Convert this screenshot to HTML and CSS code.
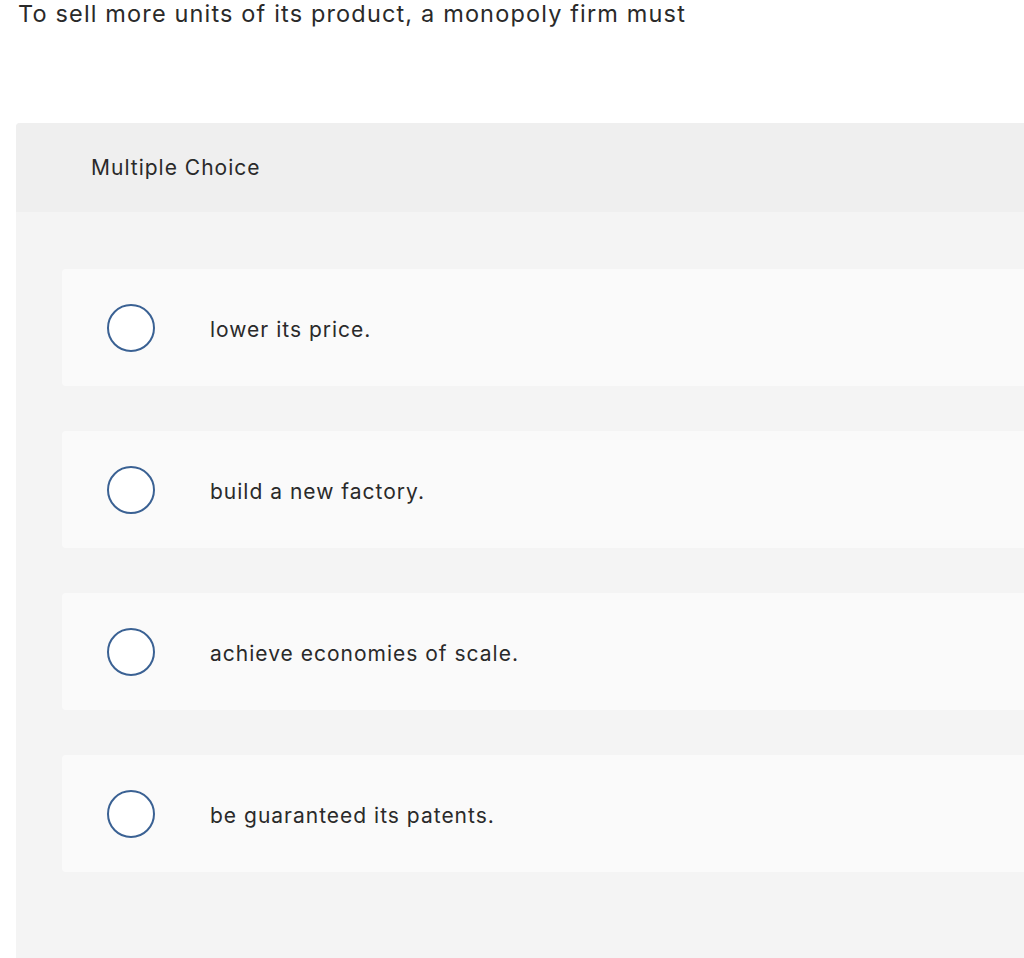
FILE: index.html
```html
<!DOCTYPE html>
<html>
<head>
<meta charset="utf-8">
<link rel="stylesheet" href="styles.css">
</head>
<body>
<div class="page">
  <p class="question">To sell more units of its product, a monopoly firm must</p>
  <div class="panel">
    <div class="panel-head">Multiple Choice</div>
    <div class="panel-body">
      <div class="option"><span class="radio"></span><span class="label">lower its price.</span></div>
      <div class="option"><span class="radio"></span><span class="label">build a new factory.</span></div>
      <div class="option"><span class="radio"></span><span class="label">achieve economies of scale.</span></div>
      <div class="option"><span class="radio"></span><span class="label">be guaranteed its patents.</span></div>
    </div>
  </div>
</div>
</body>
</html>
```

FILE: styles.css
```css
html, body {
  margin: 0;
  padding: 0;
  background: #ffffff;
  overflow: hidden;
}
.page {
  width: 1024px;
  height: 958px;
  overflow: hidden;
  font-family: Inter, Lato, sans-serif;
  font-variant-ligatures: none;
  color: #2a2a2a;
}
.question {
  margin: 0;
  padding: 0 0 0 18px;
  height: 123px;
  font-size: 23.5px;
  line-height: 28px;
  letter-spacing: 1.15px;
  white-space: nowrap;
}
.panel {
  margin-left: 16px;
  width: 1100px;
  border-radius: 4px 0 0 0;
  background: #f4f4f4;
  height: 900px;
}
.panel-head {
  height: 89px;
  background: #efefef;
  border-radius: 4px 0 0 0;
  padding-left: 75px;
  display: flex;
  align-items: center;
  font-size: 21px;
  letter-spacing: 1px;
}
.panel-body {
  padding: 57px 0 0 46px;
  display: flex;
  flex-direction: column;
  gap: 45px;
}
.option {
  height: 117px;
  background: #fafafa;
  border-radius: 4px;
  display: flex;
  align-items: center;
  padding-left: 45px;
}
.radio {
  width: 44px;
  height: 44px;
  border: 2px solid #3a6193;
  border-radius: 50%;
  background: #ffffff;
  flex: none;
}
.label {
  margin-left: 55px;
  padding-top: 3px;
  font-size: 21px;
  letter-spacing: 1px;
}
```
